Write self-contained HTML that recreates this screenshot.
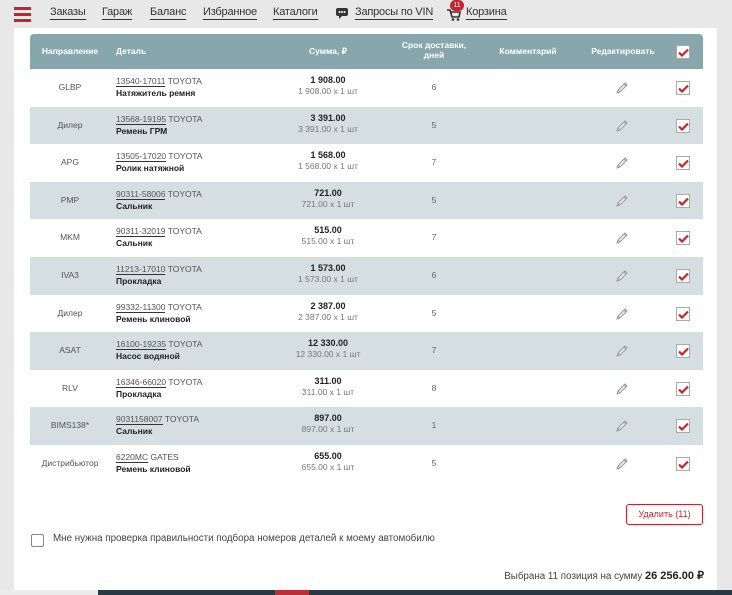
<!DOCTYPE html>
<html><head><meta charset="utf-8">
<style>
*{margin:0;padding:0;box-sizing:border-box}
body{width:732px;height:595px;overflow:hidden;background:#e8e8e8;font-family:"Liberation Sans","Noto Sans CJK SC",sans-serif;position:relative;color:#333}
.nav{position:absolute;top:0;left:0;height:28px;width:732px}
.nav a{position:absolute;top:6px;font-size:11px;color:#333;text-decoration:none;border-bottom:1px solid #333;line-height:13px;letter-spacing:-0.2px}
.burger{position:absolute;left:14px;top:7px;width:17px}
.burger i{display:block;height:3px;background:#c8232c;margin-bottom:3px}
.panel{position:absolute;left:14px;top:28px;width:703px;height:562px;background:#fff}
.tbl{position:absolute;left:30px;top:34px;width:673px}
.hdr{height:35px;background:#87a7ad;border-radius:4px 4px 0 0;position:relative;color:#fff;font-size:8.5px;font-weight:bold}
.hdr span{position:absolute;top:12px}
.row{height:37.6px;position:relative;font-size:8.5px}
.row.g{background:#d5dee1}
.row span{position:absolute}
.c1{left:0;width:80px;text-align:center;top:13px;color:#555}
.c2{left:86px;top:6px;line-height:12px;color:#555}
.c2 u{text-decoration:none;border-bottom:1px solid #333}
.c2 b{display:block;color:#222;font-weight:bold;font-size:8.5px}
.c3{left:248px;width:100px;text-align:center;top:6px;line-height:11px;color:#777}
.c3 b{display:block;color:#222;font-size:9px}
.c4{left:399px;width:10px;text-align:center;top:13px;color:#666}
.pen{left:585px;top:12px}
.cb{left:646px;top:12px;width:14px;height:14px;border:1px solid #aaa;background:#fff}
.cb svg{position:absolute;left:1px;top:2px}
.foot{position:absolute;font-size:9.8px;color:#444}
</style></head><body>
<div class="nav">
<div class="burger"><i></i><i></i><i></i></div>
<a style="left:50px">Заказы</a>
<a style="left:102px">Гараж</a>
<a style="left:150px">Баланс</a>
<a style="left:203px">Избранное</a>
<a style="left:273px">Каталоги</a>
<svg style="position:absolute;left:336px;top:8px" width="14" height="12" viewBox="0 0 14 12"><rect x="0" y="0" width="12" height="8" rx="2" fill="#333"/><path d="M3 8 L3 11 L6 8Z" fill="#333"/><circle cx="3.5" cy="4" r="1" fill="#fff"/><circle cx="6" cy="4" r="1" fill="#fff"/><circle cx="8.5" cy="4" r="1" fill="#fff"/></svg>
<a style="left:355px">Запросы по VIN</a>
<svg style="position:absolute;left:447px;top:9px" width="14" height="12" viewBox="0 0 14 12"><path d="M0 1 H3 L5 8 H12 L13 3 H4" stroke="#333" stroke-width="1.6" fill="none"/><circle cx="6" cy="10.5" r="1.3" fill="#333"/><circle cx="11" cy="10.5" r="1.3" fill="#333"/></svg>
<div style="position:absolute;left:450px;top:0;width:14px;height:11px;border-radius:6px;background:#c8232c;color:#fff;font-size:7px;text-align:center;line-height:11px">11</div>
<a style="left:466px">Корзина</a>
</div>
<div class="panel"></div>
<div class="tbl">
<div class="hdr">
<span style="left:0;width:80px;text-align:center">Направление</span>
<span style="left:86px">Деталь</span>
<span style="left:248px;width:100px;text-align:center">Сумма, ₽</span>
<span style="left:364px;width:80px;text-align:center;top:6px;line-height:10px">Срок доставки,<br>дней</span>
<span style="left:458px;width:80px;text-align:center">Комментарий</span>
<span style="left:553px;width:80px;text-align:center">Редактировать</span>
<span class="cb" style="position:absolute;left:646px;top:11px;width:14px;height:14px;border:1px solid #aaa;background:#fff"><svg style="position:absolute;left:1px;top:2px" width="11" height="9" viewBox="0 0 11 9"><path d="M1 4.5 L4 7.5 L10 1.5" stroke="#c8232c" stroke-width="2.2" fill="none"/></svg></span>
</div>
<div id="rows"></div>
</div>
<div style="position:absolute;left:626px;top:504px;width:77px;height:21px;border:1px solid #c8232c;border-radius:3px;color:#c8232c;font-size:9px;text-align:center;line-height:19px">Удалить (11)</div>
<div style="position:absolute;left:31px;top:534px;width:13px;height:13px;border:1px solid #888;border-radius:2px;background:#fff"></div>
<div class="foot" style="left:53px;top:533px">Мне нужна проверка правильности подбора номеров деталей к моему автомобилю</div>
<div class="foot" style="right:28px;top:569px">Выбрана 11 позиция на сумму <b style="font-size:11px;color:#222">26 256.00 ₽</b></div>
<div style="position:absolute;left:0;top:590px;width:98px;height:5px;background:#ececec"></div>
<div style="position:absolute;left:98px;top:590px;width:634px;height:5px;background:#2a3a44"></div>
<div style="position:absolute;left:275px;top:590px;width:34px;height:5px;background:#b83036"></div>
<script>
var d=[["GLBP","13540-17011","TOYOTA","Натяжитель ремня","1 908.00","6"],
["Дилер","13568-19195","TOYOTA","Ремень ГРМ","3 391.00","5"],
["APG","13505-17020","TOYOTA","Ролик натяжной","1 568.00","7"],
["PMP","90311-58006","TOYOTA","Сальник","721.00","5"],
["MKM","90311-32019","TOYOTA","Сальник","515.00","7"],
["IVA3","11213-17010","TOYOTA","Прокладка","1 573.00","6"],
["Дилер","99332-11300","TOYOTA","Ремень клиновой","2 387.00","5"],
["ASAT","16100-19235","TOYOTA","Насос водяной","12 330.00","7"],
["RLV","16346-66020","TOYOTA","Прокладка","311.00","8"],
["BIMS138*","9031158007","TOYOTA","Сальник","897.00","1"],
["Дистрибьютор","6220MC","GATES","Ремень клиновой","655.00","5"]];
var h="";
d.forEach(function(r,i){h+='<div class="row'+(i%2?' g':'')+'"><span class="c1">'+r[0]+'</span><span class="c2"><u>'+r[1]+'</u> '+r[2]+'<b>'+r[3]+'</b></span><span class="c3"><b>'+r[4]+'</b>'+r[4]+' x 1 шт</span><span class="c4">'+r[5]+'</span><span class="pen"><svg width="14" height="14" viewBox="0 0 14 14"><path d="M2 12 L3 9 L10 2 L12 4 L5 11 Z M3 9 L5 11 M9 3 L11 5" stroke="#999" stroke-width="1" fill="#eee"/></svg></span><span class="cb"><svg width="11" height="9" viewBox="0 0 11 9"><path d="M1 4.5 L4 7.5 L10 1.5" stroke="#c8232c" stroke-width="2.2" fill="none"/></svg></span></div>';});
document.getElementById("rows").innerHTML=h;
</script>
</body></html>
